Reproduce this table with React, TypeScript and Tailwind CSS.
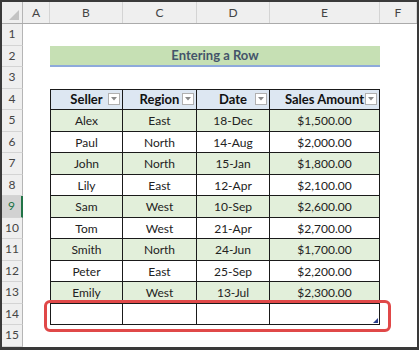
import React from "react";

const rows = [
  ["Alex", "East", "18-Dec", "$1,500.00"],
  ["Paul", "North", "14-Aug", "$2,000.00"],
  ["John", "North", "15-Jan", "$1,800.00"],
  ["Lily", "East", "12-Apr", "$2,100.00"],
  ["Sam", "West", "10-Sep", "$2,600.00"],
  ["Tom", "West", "21-Apr", "$2,700.00"],
  ["Smith", "North", "24-Jun", "$1,700.00"],
  ["Peter", "East", "25-Sep", "$2,200.00"],
  ["Emily", "West", "13-Jul", "$2,300.00"],
];

const cols = ["A", "B", "C", "D", "E", "F"];
const colW = ["w-[27px]", "w-[73px]", "w-[74px]", "w-[73px]", "w-[110px]", "w-[37px]"];

function RowNum({ n, selected }: { n: number; selected?: boolean }) {
  return (
    <div
      className={
        "w-[21px] shrink-0 h-full flex items-center justify-center text-[12px] border-b border-[#d4d4d4] " +
        (selected
          ? "bg-[#d2d2d2] text-[#217346] border-r-2 border-r-[#217346]"
          : "bg-[#efefef] text-[#444] border-r border-r-[#b5b5b5]")
      }
    >
      {n}
    </div>
  );
}

function Dropdown() {
  return (
    <div className="absolute right-[2px] top-1/2 -translate-y-1/2 w-[12px] h-[12px] bg-white border border-[#b0b0b0] flex items-center justify-center">
      <svg width="6" height="4" viewBox="0 0 6 4">
        <path d="M0 0 L6 0 L3 3.5 Z" fill="#8a8a8a" />
      </svg>
    </div>
  );
}

export default function App() {
  const font = { fontFamily: "Lato, 'Liberation Sans', sans-serif" };
  return (
    <div
      className="relative w-[419px] h-[350px] bg-[#3a3a3a] pt-[2px] pl-[2px] pr-[2px] overflow-hidden"
      style={font}
    >
      <div className="bg-white w-[415px] flex flex-col">
        {/* column header */}
        <div className="flex h-[22px] bg-[#efefef] border-b border-[#ababab]">
          <div className="w-[21px] shrink-0 h-full border-r border-[#b5b5b5] relative">
            <svg className="absolute right-[3px] bottom-[3px]" width="10" height="10" viewBox="0 0 10 10">
              <path d="M10 0 L10 10 L0 10 Z" fill="#c3c3c3" />
            </svg>
          </div>
          {cols.map((c, i) => (
            <div
              key={c}
              className={
                colW[i] +
                " shrink-0 h-full flex items-center justify-center text-[12px] text-[#444] border-r border-[#d4d4d4]"
              }
            >
              {c}
            </div>
          ))}
        </div>

        {/* row 1 */}
        <div className="flex h-[21.5px]">
          <RowNum n={1} />
        </div>

        {/* row 2: title */}
        <div className="flex h-[21.5px]">
          <RowNum n={2} />
          <div className="w-[27px] shrink-0" />
          <div className="w-[330px] shrink-0 h-full bg-[#c6e0b4] border-b-2 border-[#8eaadb] flex items-center justify-center text-[13px] font-bold text-[#44546a]">
            Entering a Row
          </div>
        </div>

        {/* row 3 */}
        <div className="flex h-[21.5px]">
          <RowNum n={3} />
        </div>

        {/* row 4: table header */}
        <div className="flex h-[21.5px]">
          <RowNum n={4} />
          <div className="w-[27px] shrink-0" />
          {["Seller", "Region", "Date", "Sales Amount"].map((h, i) => (
            <div
              key={h}
              className={
                colW[i + 1] +
                " shrink-0 h-full relative bg-[#dde7f2] border-t border-b border-r border-[#1a1a1a] flex items-center justify-center pt-[1px] text-[13px] font-bold text-[#111] " +
                (i === 0 ? "border-l" : "")
              }
            >
              {h}
              <Dropdown />
            </div>
          ))}
        </div>

        {/* data rows */}
        {rows.map((r, ri) => (
          <div key={ri} className="flex h-[21.5px]">
            <RowNum n={ri + 5} selected={ri + 5 === 9} />
            <div className="w-[27px] shrink-0" />
            {r.map((v, i) => (
              <div
                key={i}
                className={
                  colW[i + 1] +
                  " shrink-0 h-full border-b border-r border-[#1a1a1a] flex items-center justify-center pt-[2px] text-[12px] text-[#222] " +
                  (ri % 2 === 0 ? "bg-[#e2efda] " : "bg-white ") +
                  (i === 0 ? "border-l" : "")
                }
              >
                {v}
              </div>
            ))}
          </div>
        ))}

        {/* row 14: empty new row */}
        <div className="flex h-[21.5px]">
          <RowNum n={14} />
          <div className="w-[27px] shrink-0" />
          {[0, 1, 2, 3].map((i) => (
            <div
              key={i}
              className={
                colW[i + 1] +
                " shrink-0 h-full border-b border-r border-[#1a1a1a] bg-white relative " +
                (i === 0 ? "border-l" : "")
              }
            >
              {i === 3 && (
                <svg className="absolute right-[1px] bottom-[1px]" width="5" height="5" viewBox="0 0 5 5">
                  <path d="M5 0 L5 5 L0 5 Z" fill="#2b3f8c" />
                </svg>
              )}
            </div>
          ))}
        </div>

        {/* row 15 */}
        <div className="flex h-[21.5px]">
          <RowNum n={15} />
        </div>
      </div>

      {/* red highlight box */}
      <div className="absolute left-[44px] top-[300px] w-[347px] h-[32px] border-[3px] border-[#e04848] rounded-[6px]" />
    </div>
  );
}
